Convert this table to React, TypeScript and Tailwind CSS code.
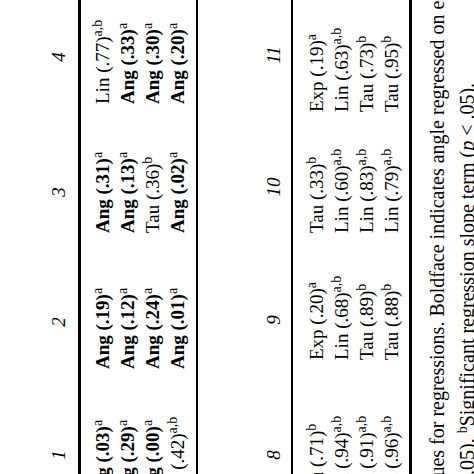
type Cell = { m: string; v: string; s: string };

const ang = (v: string): Cell => ({ m: "Ang", v, s: "a" });
const lin = (v: string): Cell => ({ m: "Lin", v, s: "a,b" });
const tau = (v: string): Cell => ({ m: "Tau", v, s: "b" });
const exp = (v: string): Cell => ({ m: "Exp", v, s: "a" });

// row-major, 4 columns per row
const topRows: Cell[] = [
  ang(".03"), ang(".19"), ang(".31"), lin(".77"),
  ang(".29"), ang(".12"), ang(".13"), ang(".33"),
  ang(".00"), ang(".24"), tau(".36"), ang(".30"),
  lin(".42"), ang(".01"), ang(".02"), ang(".20"),
];

const bottomRows: Cell[] = [
  tau(".71"), exp(".20"), tau(".33"), exp(".19"),
  lin(".94"), lin(".68"), lin(".60"), lin(".63"),
  lin(".91"), tau(".89"), lin(".83"), tau(".73"),
  lin(".96"), tau(".88"), lin(".79"), tau(".95"),
];

function Entry({ c }: { c: Cell }) {
  return (
    <div className={`whitespace-nowrap h-[25px] leading-[25px] ${c.m === "Ang" ? "font-bold" : ""}`}>
      {c.m} ({c.v})<sup className="text-[14px] font-normal">{c.s}</sup>
    </div>
  );
}

export default function App() {
  return (
    <div className="w-[474px] h-[474px] overflow-hidden bg-white">
      <div className="w-[474px] h-[474px] -rotate-90 overflow-hidden bg-white text-black font-['Liberation_Serif',serif] text-[19px]">
        <div className="pt-[46px]">
          {/* header 1 */}
          <div className="flex h-[25px] leading-[25px] italic ml-[-11px]">
            <div className="w-[60px] text-center">1</div>
            <div className="w-[60px] text-center ml-[73px]">2</div>
            <div className="w-[60px] text-center ml-[70px]">3</div>
            <div className="w-[60px] text-center ml-[75px]">4</div>
          </div>
          <div className="mt-[7px] h-[3px] bg-black" />
          <div className="mt-[9px] ml-[-27px] grid grid-cols-[132px_136px_129px_150px]">
            {topRows.map((c, i) => (
              <Entry key={i} c={c} />
            ))}
          </div>
          <div className="mt-[6px] h-[2px] bg-black" />

          {/* header 2 */}
          <div className="mt-[63px] flex h-[25px] leading-[25px] italic ml-[-11px]">
            <div className="w-[60px] text-center">8</div>
            <div className="w-[60px] text-center ml-[75px]">9</div>
            <div className="w-[60px] text-center ml-[73px]">10</div>
            <div className="w-[60px] text-center ml-[72px]">11</div>
          </div>
          <div className="mt-[5px] h-[2px] bg-black" />
          <div className="mt-[11px] ml-[-26px] grid grid-cols-[140px_127px_121px_150px]">
            {bottomRows.map((c, i) => (
              <Entry key={i} c={c} />
            ))}
          </div>
          <div className="mt-[5px] h-[3px] bg-black" />

          {/* notes */}
          <div className="mt-[10px] text-[20px] leading-[30px] whitespace-nowrap">
            <div className="ml-[-27px]">values for regressions. Boldface indicates angle regressed on each</div>
            <div className="ml-[-1px]">
              .05), <sup className="text-[14px]">b</sup>Significant regression slope term (<i>p</i> &lt; .05).
            </div>
          </div>
        </div>
      </div>
    </div>
  );
}
